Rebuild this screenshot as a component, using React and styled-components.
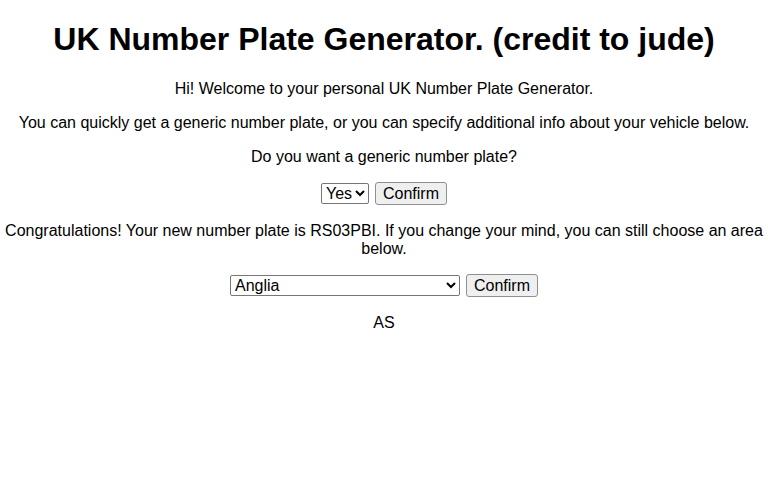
import React, { useState } from "react";
import styled, { createGlobalStyle } from "styled-components";

const GlobalStyle = createGlobalStyle`
  body {
    margin: 0 4px;
    background: #ffffff;
    color: #000000;
    font-family: "Liberation Sans", Arial, sans-serif;
  }
`;

const Page = styled.div`
  text-align: center;
`;

const Title = styled.h1`
  font-size: 32px;
  font-weight: bold;
  margin: 21.44px 0;
`;

const Text = styled.p`
  font-size: 16px;
  line-height: normal;
  margin: 16px 0;
`;

const Controls = styled.div`
  display: flex;
  justify-content: center;
  align-items: center;
  gap: 6px;
  height: 24px;
`;

const Select = styled.select`
  font-family: "Liberation Sans", Arial, sans-serif;
  font-size: 16px;
  height: 21px;
  width: ${(p) => p.$width}px;
  padding: 0;
  border: 1px solid #767676;
  border-radius: 2px;
  background: #ffffff;
  color: #000000;
`;

const Button = styled.button`
  font-family: "Liberation Sans", Arial, sans-serif;
  font-size: 16px;
  height: 23px;
  padding: 0 7px;
  border: 1px solid #8f8f8f;
  border-radius: 3px;
  background: #efefef;
  color: #000000;
`;

const areas = ["Anglia", "Birmingham", "Cymru", "Deeside", "Essex", "Forest and Fens", "Garden of England", "Hampshire and Dorset", "Borehamwood", "Kent", "Luton", "Manchester and Merseyside", "North", "Oxford", "Preston", "Reading", "Scotland", "Severn Valley", "West of England", "Yorkshire"];

export default function App() {
  const [generic, setGeneric] = useState("Yes");
  const [area, setArea] = useState("Anglia");

  return (
    <Page>
      <GlobalStyle />
      <Title>UK Number Plate Generator. (credit to jude)</Title>
      <Text>Hi! Welcome to your personal UK Number Plate Generator.</Text>
      <Text>You can quickly get a generic number plate, or you can specify additional info about your vehicle below.</Text>
      <Text>Do you want a generic number plate?</Text>
      <Controls>
        <Select $width={48} value={generic} onChange={(e) => setGeneric(e.target.value)}>
          <option>Yes</option>
          <option>No</option>
        </Select>
        <Button>Confirm</Button>
      </Controls>
      <Text>Congratulations! Your new number plate is RS03PBI. If you change your mind, you can still choose an area below.</Text>
      <Controls>
        <Select $width={230} value={area} onChange={(e) => setArea(e.target.value)}>
          {areas.map((a) => (
            <option key={a}>{a}</option>
          ))}
        </Select>
        <Button>Confirm</Button>
      </Controls>
      <Text>AS</Text>
    </Page>
  );
}
